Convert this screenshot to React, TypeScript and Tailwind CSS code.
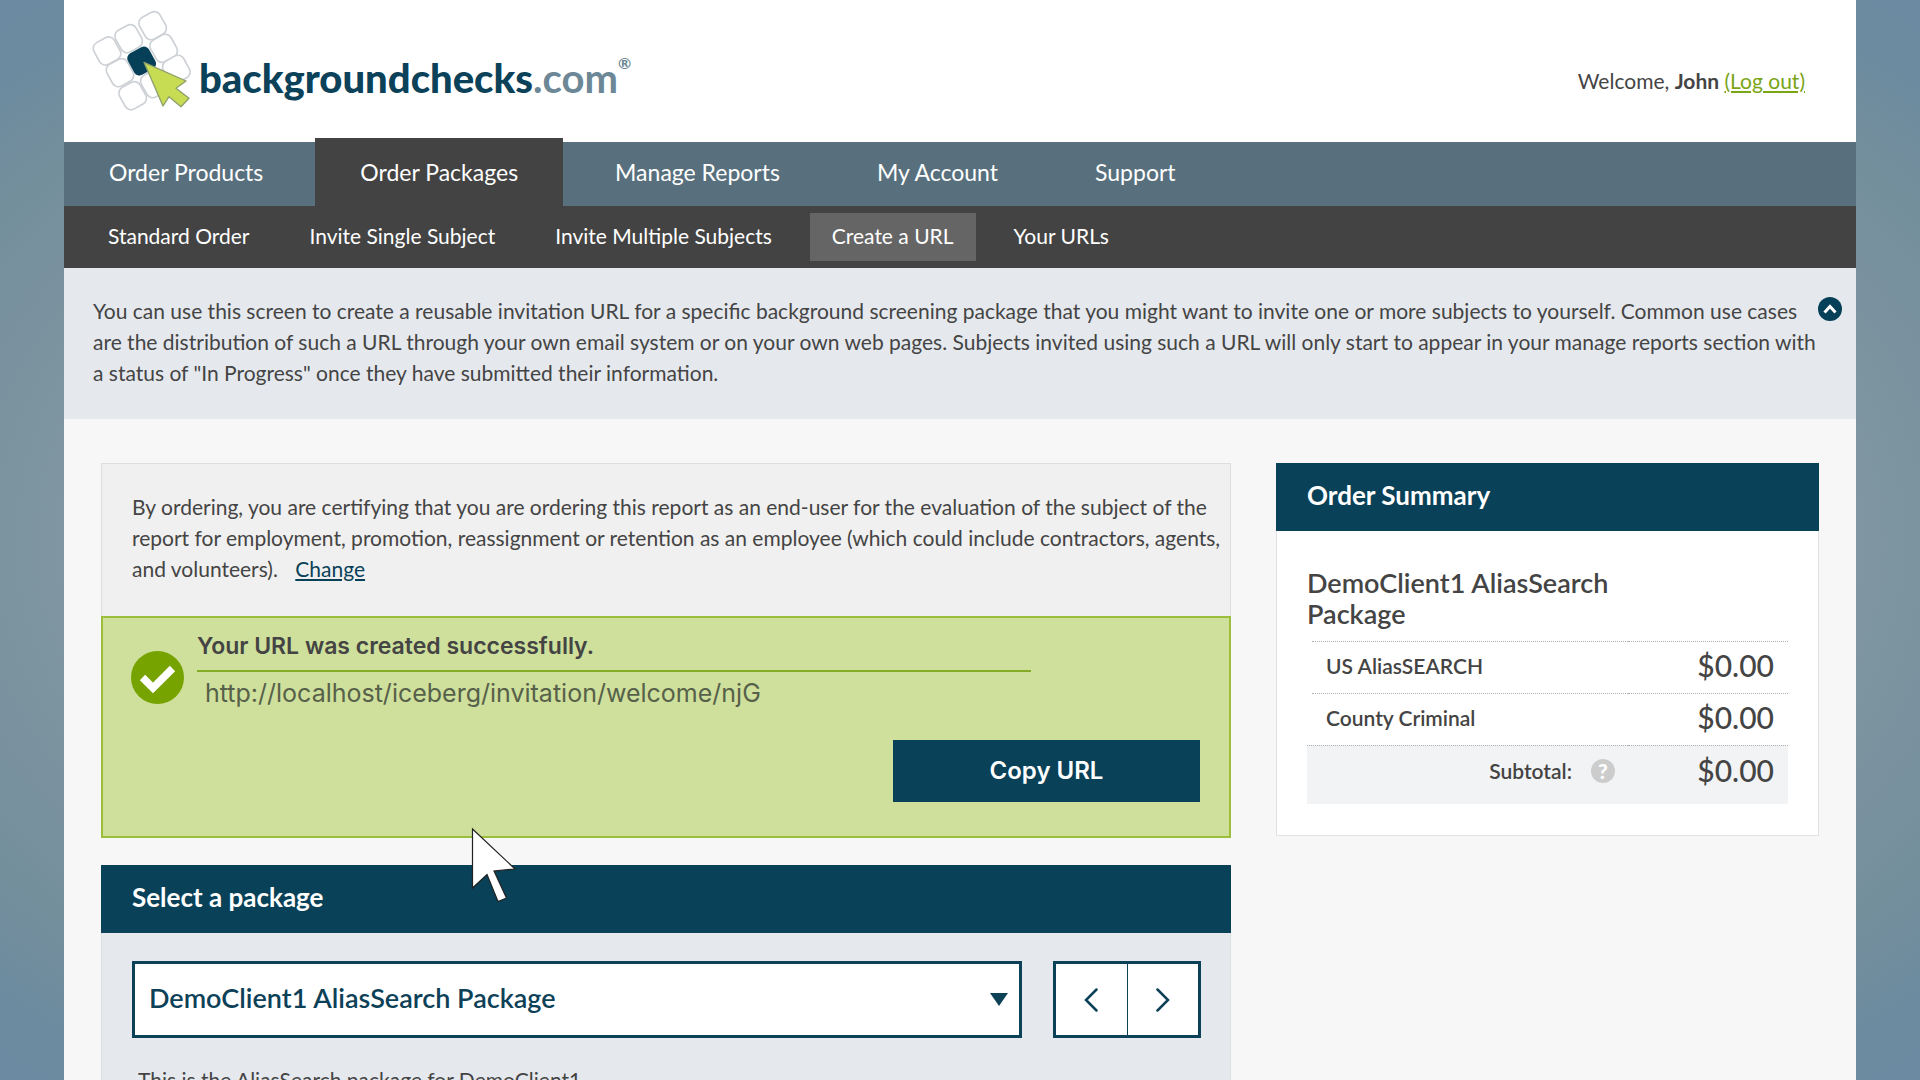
import { useState } from "react";

const mainNav = ["Order Products", "Order Packages", "Manage Reports", "My Account", "Support"];
const subNav = [
    "Standard Order",
    "Invite Single Subject",
    "Invite Multiple Subjects",
    "Create a URL",
    "Your URLs",
];
const products = [
    { name: "US AliasSEARCH", price: "$0.00" },
    { name: "County Criminal", price: "$0.00" },
];

// centers of the white tiles, the dark one is drawn on its own
const tiles = [
    [203, 62], [131, 101], [66, 138],
    [236, 130], [105, 203],
    [274, 193], [208, 236], [143, 272],
];

function Logo() {
    return (
        <a href="#" className="flex items-start pt-[5px] pl-[21px]">
            <svg viewBox="0 0 360 345" className="h-[115px] w-[120px] shrink-0" aria-hidden="true">
                {tiles.map(([x, y]) => (
                    <rect
                        key={`${x}-${y}`}
                        x={x - 35}
                        y={y - 37}
                        width="70"
                        height="74"
                        rx="20"
                        transform={`rotate(-29 ${x} ${y})`}
                        fill="#fff"
                        stroke="#cdd1d6"
                        strokeWidth="5"
                    />
                ))}
                <rect x="134" y="131" width="72" height="74" rx="17" transform="rotate(-29 170 168)" fill="#063f58" />
                <path
                    d="M177 172 L303 228 L273 250 L312 280 L288 305 L252 275 L234 303 Z"
                    fill="#c8dc53"
                    stroke="#8d9f6b"
                    strokeWidth="4"
                    strokeLinejoin="round"
                />
            </svg>
            <span className="-ml-[6px] mt-[43px] flex items-start text-[40px] leading-[60px] font-black text-[#0b4159]">
                backgroundchecks<span className="font-bold text-[#6c8796]">.com</span>
                <span className="text-[16px] leading-[30px] font-bold text-[#6c8796]">®</span>
            </span>
        </a>
    );
}

function Header() {
    return (
        <header className="flex h-[142px] items-start justify-between bg-white">
            <Logo />
            <p className="pt-[65px] pr-[51px] text-[21px] leading-[31px]">
                Welcome, <strong>John</strong>{" "}
                <a href="#" className="text-[#7aa516] underline">
                    (Log out)
                </a>
            </p>
        </header>
    );
}

function Navigation() {
    return (
        <>
            <nav className="flex h-16 gap-[7px] bg-[#58707d] text-[23px] text-white">
                {mainNav.map((item) => (
                    <a
                        key={item}
                        href="#"
                        className={
                            item === "Order Packages"
                                ? "-mt-1 flex items-center bg-[#434343] px-[45px] py-1"
                                : "flex items-center px-[45px] pb-1"
                        }
                    >
                        {item}
                    </a>
                ))}
            </nav>
            <nav className="flex h-[62px] items-center gap-4 bg-[#434343] pl-[22px] text-[21px] text-white">
                {subNav.map((item) => (
                    <a
                        key={item}
                        href="#"
                        className={
                            item === "Create a URL"
                                ? "flex h-12 items-center bg-[#656565] px-[22px] pb-[3px]"
                                : "flex h-12 items-center px-[22px] pb-[3px]"
                        }
                    >
                        {item}
                    </a>
                ))}
            </nav>
        </>
    );
}

function Intro() {
    return (
        <section className="flex items-start bg-[#e5e9ee] pt-[27px] pr-[14px] pb-[31px] pl-[29px]">
            <p className="flex-1 text-[21px] leading-[31px]">
                You can use this screen to create a reusable invitation URL for a specific background screening
                package that you might want to invite one or more subjects to yourself. Common use cases are the
                distribution of such a URL through your own email system or on your own web pages. Subjects invited
                using such a URL will only start to appear in your manage reports section with a status of "In
                Progress" once they have submitted their information.
            </p>
            <button
                type="button"
                aria-label="Hide description"
                className="mt-[2px] flex size-6 shrink-0 items-center justify-center rounded-full bg-[#063f58]"
            >
                <svg viewBox="0 0 14 10" className="h-[10px] w-[14px]">
                    <path d="M1.5 8.5 L7 2.5 L12.5 8.5" fill="none" stroke="#fff" strokeWidth="3" />
                </svg>
            </button>
        </section>
    );
}

function UrlCreated() {
    return (
        <section className="flex gap-[13px] border-2 border-[#9bbf3b] bg-[#cee09b] pt-[9px] pr-[29px] pb-[34px] pl-7">
            <svg viewBox="0 0 53 53" className="mt-6 size-[53px] shrink-0" aria-hidden="true">
                <circle cx="26.5" cy="26.5" r="26.5" fill="#77a300" />
                <path d="M11.5 26.5 L22 37 L41.5 17.5" fill="none" stroke="#fff" strokeWidth="7.5" />
            </svg>
            <div className="flex flex-1 flex-col font-['Inter',sans-serif]">
                <h2 className="mr-[169px] border-b-2 border-[#86ac26] pb-[5px] text-[23px] leading-[38px] font-semibold">
                    Your URL was created successfully.
                </h2>
                <p className="mt-[3px] pl-2 text-[25px] leading-[36px] text-[#57604a]">
                    http://localhost/iceberg/invitation/welcome/njG
                </p>
                <button
                    type="button"
                    className="mt-[29px] h-[62px] w-[307px] self-end bg-[#094158] text-[24px] font-semibold text-white"
                >
                    Copy URL
                </button>
            </div>
        </section>
    );
}

function PackagePicker() {
    const [selected, setSelected] = useState("DemoClient1 AliasSearch Package");

    return (
        <section className="mt-[27px]">
            <h2 className="flex h-[68px] items-center bg-[#094158] px-[31px] pb-[3px] text-[26px] font-bold text-white">
                <label htmlFor="package">Select a package</label>
            </h2>
            <div className="border-x border-[#dadfe3] bg-[#e5e9ee] pt-7 pr-[29px] pb-10 pl-[30px]">
                <div className="flex gap-[31px]">
                    <div className="relative flex-1">
                        <select
                            id="package"
                            value={selected}
                            onChange={(e) => setSelected(e.target.value)}
                            className="h-[77px] w-full appearance-none border-[3px] border-[#0d4158] bg-white px-[14px] pb-[3px] text-[27px] font-semibold text-[#0d4158]"
                        >
                            <option>DemoClient1 AliasSearch Package</option>
                        </select>
                        <svg
                            viewBox="0 0 18 13"
                            className="pointer-events-none absolute top-8 right-[14px] h-[13px] w-[18px]"
                            aria-hidden="true"
                        >
                            <path d="M0 0 H18 L9 13 Z" fill="#0d4158" />
                        </svg>
                    </div>
                    <div className="flex h-[77px] w-[148px] divide-x divide-[#0d4158] border-[3px] border-[#0d4158] bg-white">
                        <button type="button" aria-label="Previous package" className="flex flex-1 items-center justify-center">
                            <svg viewBox="0 0 14 24" className="h-6 w-[14px]">
                                <path d="M12.5 1.5 L2 12 L12.5 22.5" fill="none" stroke="#0d4158" strokeWidth="2.5" strokeLinecap="round" />
                            </svg>
                        </button>
                        <button type="button" aria-label="Next package" className="flex flex-1 items-center justify-center">
                            <svg viewBox="0 0 14 24" className="h-6 w-[14px]">
                                <path d="M1.5 1.5 L12 12 L1.5 22.5" fill="none" stroke="#0d4158" strokeWidth="2.5" strokeLinecap="round" />
                            </svg>
                        </button>
                    </div>
                </div>
                <p className="mt-[26px] pl-[6px] text-[21px] leading-[31px]">
                    This is the AliasSearch package for DemoClient1
                </p>
            </div>
        </section>
    );
}

function OrderSummary() {
    return (
        <aside className="w-[543px] shrink-0">
            <h2 className="flex h-[68px] items-center bg-[#094158] px-[31px] pb-[3px] text-[26px] font-bold text-white">
                Order Summary
            </h2>
            <div className="border border-t-0 border-[#e2e2e2] bg-white px-[30px] pt-9 pb-[31px]">
                <h3 className="mb-3 w-[330px] text-[27px] leading-[31px] font-semibold">
                    DemoClient1 AliasSearch Package
                </h3>
                <table className="w-full border-separate border-spacing-0">
                    <tbody>
                        {products.map((product) => (
                            <tr key={product.name}>
                                <th scope="row" className="p-0 pl-[5px] text-left text-[21px] font-semibold">
                                    <span className="flex h-[52px] items-center border-t border-dotted border-[#b0b0b0] pb-[3px] pl-[14px]">
                                        {product.name}
                                    </span>
                                </th>
                                <td className="w-40 border-t border-dotted border-[#b0b0b0] p-0 pr-[14px] pb-[5px] text-right text-[30px] leading-[36px] font-medium">
                                    {product.price}
                                </td>
                            </tr>
                        ))}
                        <tr className="bg-[#f2f3f5] align-top">
                            <th
                                scope="row"
                                className="h-[59px] border-t border-dotted border-[#b0b0b0] p-0 pt-[9px] pr-[13px] text-[21px] leading-[31px] font-semibold"
                            >
                                <span className="flex items-center justify-end gap-[19px]">
                                    Subtotal:
                                    <button
                                        type="button"
                                        aria-label="About the subtotal"
                                        className="flex size-6 items-center justify-center rounded-full bg-[#cccccc] text-[21px] leading-6 font-black text-white"
                                    >
                                        ?
                                    </button>
                                </span>
                            </th>
                            <td className="border-t border-dotted border-[#b0b0b0] p-0 pt-[6px] pr-[14px] text-right text-[30px] leading-[36px] font-medium">
                                $0.00
                            </td>
                        </tr>
                    </tbody>
                </table>
            </div>
        </aside>
    );
}

function Cursor() {
    return (
        <svg
            viewBox="0 0 48 80"
            className="pointer-events-none absolute top-[826px] left-[470px] h-[80px] w-[48px]"
            aria-hidden="true"
        >
            <path
                d="M2.5 3 L45 43 L24 45 L36.5 72 L28 75.5 L17 48.5 L2.5 62 Z"
                fill="#fff"
                stroke="#222"
                strokeWidth="1.2"
            />
        </svg>
    );
}

export default function App() {
    return (
        <div className="relative h-screen overflow-hidden bg-[radial-gradient(ellipse_at_center,#8399a6_60%,#7b939f_72%,#748f9c_82%,#6d8ba0_93%,#6b89a0)] px-16 font-['Lato',sans-serif] text-[#444444]">
            <div className="min-h-full bg-[#f7f7f7]">
                <Header />
                <Navigation />
                <Intro />
                <main className="flex items-start gap-[45px] px-[37px] pt-11">
                    <div className="flex-1">
                        <section className="border border-b-0 border-[#dedede] bg-[#f0f0f0] pt-[27px] pr-2 pb-8 pl-[30px]">
                            <p className="text-[21px] leading-[31px]">
                                By ordering, you are certifying that you are ordering this report as an end-user for
                                the evaluation of the subject of the report for employment, promotion, reassignment
                                or retention as an employee (which could include contractors, agents, and
                                volunteers).{" "}
                                <a href="#" className="ml-3 text-[#094158] underline">
                                    Change
                                </a>
                            </p>
                        </section>
                        <UrlCreated />
                        <PackagePicker />
                    </div>
                    <OrderSummary />
                </main>
            </div>
            <Cursor />
        </div>
    );
}
